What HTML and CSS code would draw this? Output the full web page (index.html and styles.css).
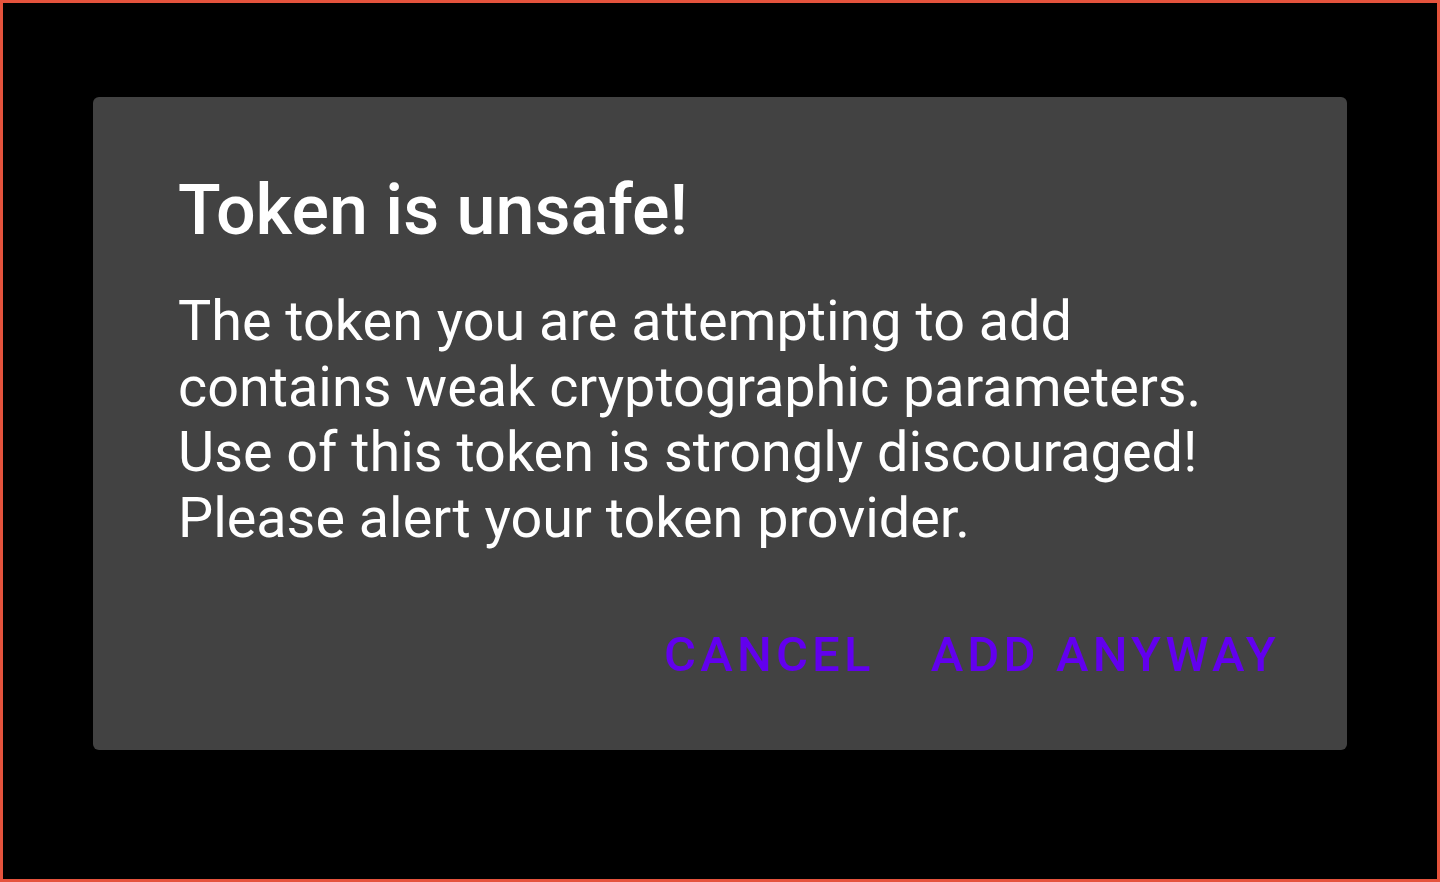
FILE: index.html
```html
<!DOCTYPE html>
<html lang="en">
<head>
<meta charset="utf-8">
<title>Token is unsafe!</title>
<link rel="stylesheet" href="styles.css">
</head>
<body>
  <div class="dialog" role="dialog">
    <h1 class="dialog-title">Token is unsafe!</h1>
    <p class="dialog-message">The token you are attempting to add contains weak cryptographic parameters. Use of this token is strongly discouraged! Please alert your token provider.</p>
    <div class="dialog-actions">
      <button class="dialog-btn" type="button">Cancel</button>
      <button class="dialog-btn" type="button">Add anyway</button>
    </div>
  </div>
</body>
</html>
```

FILE: styles.css
```css
html, body {
  margin: 0;
  padding: 0;
}

body {
  box-sizing: border-box;
  width: 1440px;
  height: 882px;
  border: 3px solid #e5533d;
  background: #000000;
  padding: 94px 90px 0 90px;
  font-family: Roboto, "Liberation Sans", sans-serif;
}

.dialog {
  box-sizing: border-box;
  width: 1254px;
  height: 653px;
  background: #424242;
  border-radius: 6px;
  padding: 72px 85px 0 85px;
  display: flex;
  flex-direction: column;
}

.dialog-title {
  margin: 0;
  font-size: 70px;
  font-weight: 500;
  line-height: 82px;
  color: #ffffff;
}

.dialog-message {
  margin: 38px 0 0 0;
  font-size: 55.75px;
  font-weight: 400;
  line-height: 65.6px;
  color: #ffffff;
}

.dialog-actions {
  display: flex;
  justify-content: flex-end;
  gap: 56px;
  margin: 75px -18px 0 0;
}

.dialog-btn {
  background: none;
  border: 0;
  padding: 0;
  margin: 0;
  font-family: Roboto, "Liberation Sans", sans-serif;
  font-size: 49px;
  font-weight: 500;
  line-height: 57px;
  letter-spacing: 4.2px;
  text-transform: uppercase;
  color: #6200ee;
  cursor: pointer;
}
```
